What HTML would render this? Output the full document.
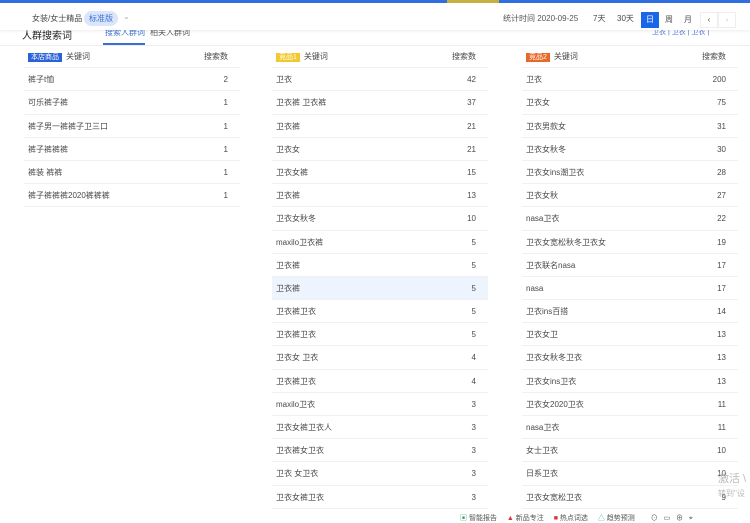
<!DOCTYPE html>
<html><head><meta charset="utf-8"><style>
body{margin:0;width:750px;height:523px;overflow:hidden;background:#fff;font-family:"Liberation Sans","Noto Sans CJK SC",sans-serif;font-size:8px;color:#4a4a4a;position:relative}
.top{position:absolute;left:0;top:0;width:750px;height:3px;background:#2f6fe0}
.top i{position:absolute;left:447px;width:52px;height:3px;background:#c8b040}
.hdr{position:absolute;top:3px;left:0;width:750px;height:27px;box-shadow:0 1px 3px rgba(0,0,0,.08);background:#fff;z-index:2}
.a{position:absolute;white-space:nowrap}
.badge{background:#dbe6fb;color:#3b6fd8;border-radius:8px;padding:2px 5px}
.btn{position:absolute;top:9px;height:14px;width:16px;text-align:center;line-height:14px;color:#555;border:1px solid #eee}
.col{position:absolute;top:45px}
.row{height:23.2px;line-height:23.2px;border-bottom:1px solid #f0f0f0;position:relative;box-sizing:border-box;padding-left:4px}
.row b{font-weight:normal;position:absolute;right:12px;top:0}
.tag{color:#fff;padding:1px 3px;margin-right:4px;font-size:7px}
.hl{background:#eef4fe}
</style></head><body>
<div class="top"><i></i></div>
<div class="hdr">
<span class="a" style="left:32px;top:10px;">女装/女士精品</span>
<span class="a badge" style="left:84px;top:8px;">标准版</span>
<span class="a" style="left:123px;top:9px;color:#aaa">⌄</span>
<span class="a" style="left:503px;top:10px;color:#555">统计时间 2020-09-25</span>
<span class="a" style="left:593px;top:10px">7天</span>
<span class="a" style="left:617px;top:10px">30天</span>
<div class="btn" style="left:641px;background:#1a66e8;color:#fff;border-color:#1a66e8">日</div>
<div class="btn" style="left:660px;border-color:#fff">周</div>
<div class="btn" style="left:679px;border-color:#fff">月</div>
<div class="btn" style="left:700px">‹</div>
<div class="btn" style="left:718px;color:#ccc">›</div>
</div>
<span class="a" style="left:22px;top:27px;font-size:10px;color:#222">人群搜索词</span>
<span class="a" style="left:105px;top:27px;color:#3b6fd8">搜索人群词</span>
<span class="a" style="left:150px;top:27px;color:#555">相关人群词</span>
<div class="a" style="left:103px;top:43px;width:42px;height:2px;background:#3b6fd8"></div>
<span class="a" style="left:652px;top:27px;color:#3b6fd8;font-size:7px">卫衣 | 卫衣 | 卫衣 |</span>
<div class="a" style="left:0;top:45px;width:750px;height:1px;background:#eee"></div>

<div class="col" style="left:24px;width:216px">
<div class="row"><span class="tag" style="background:#2a62d8">本店商品</span>关键词<b>搜索数</b></div>
<div class="row">裤子t恤<b>2</b></div>
<div class="row">可乐裤子裤<b>1</b></div>
<div class="row">裤子男一裤裤子卫三口<b>1</b></div>
<div class="row">裤子裤裤裤<b>1</b></div>
<div class="row">裤装 裤裤<b>1</b></div>
<div class="row">裤子裤裤裤2020裤裤裤<b>1</b></div>
</div>

<div class="col" style="left:272px;width:216px">
<div class="row"><span class="tag" style="background:#f2c82c">竞品1</span>关键词<b>搜索数</b></div>
<div class="row">卫衣<b>42</b></div>
<div class="row">卫衣裤 卫衣裤<b>37</b></div>
<div class="row">卫衣裤<b>21</b></div>
<div class="row">卫衣女<b>21</b></div>
<div class="row">卫衣女裤<b>15</b></div>
<div class="row">卫衣裤<b>13</b></div>
<div class="row">卫衣女秋冬<b>10</b></div>
<div class="row">maxilo卫衣裤<b>5</b></div>
<div class="row">卫衣裤<b>5</b></div>
<div class="row hl">卫衣裤<b>5</b></div>
<div class="row">卫衣裤卫衣<b>5</b></div>
<div class="row">卫衣裤卫衣<b>5</b></div>
<div class="row">卫衣女 卫衣<b>4</b></div>
<div class="row">卫衣裤卫衣<b>4</b></div>
<div class="row">maxilo卫衣<b>3</b></div>
<div class="row">卫衣女裤卫衣人<b>3</b></div>
<div class="row">卫衣裤女卫衣<b>3</b></div>
<div class="row">卫衣 女卫衣<b>3</b></div>
<div class="row">卫衣女裤卫衣<b>3</b></div>
</div>

<div class="col" style="left:522px;width:216px">
<div class="row"><span class="tag" style="background:#e8682a">竞品2</span>关键词<b>搜索数</b></div>
<div class="row">卫衣<b>200</b></div>
<div class="row">卫衣女<b>75</b></div>
<div class="row">卫衣男款女<b>31</b></div>
<div class="row">卫衣女秋冬<b>30</b></div>
<div class="row">卫衣女ins潮卫衣<b>28</b></div>
<div class="row">卫衣女秋<b>27</b></div>
<div class="row">nasa卫衣<b>22</b></div>
<div class="row">卫衣女宽松秋冬卫衣女<b>19</b></div>
<div class="row">卫衣联名nasa<b>17</b></div>
<div class="row">nasa<b>17</b></div>
<div class="row">卫衣ins百搭<b>14</b></div>
<div class="row">卫衣女卫<b>13</b></div>
<div class="row">卫衣女秋冬卫衣<b>13</b></div>
<div class="row">卫衣女ins卫衣<b>13</b></div>
<div class="row">卫衣女2020卫衣<b>11</b></div>
<div class="row">nasa卫衣<b>11</b></div>
<div class="row">女士卫衣<b>10</b></div>
<div class="row">日系卫衣<b>10</b></div>
<div class="row">卫衣女宽松卫衣<b>9</b></div>
</div>
<span class="a" style="left:718px;top:470px;color:#bbb;font-size:11px">激活 \</span>
<span class="a" style="left:718px;top:488px;color:#bbb;font-size:8px">转到"设</span>
<div class="a" style="left:460px;top:513px;width:290px;height:10px;background:#fff;font-size:7px;color:#555">
<span style="color:#2a9d5c">▣</span> 智能报告 <span style="color:#d33;margin-left:8px">▲</span> 新品专注 <span style="color:#d33;margin-left:8px">■</span> 热点词选 <span style="color:#3aa;margin-left:8px">△</span> 趋势预测 <span style="margin-left:14px">⊙ &nbsp; ▭ &nbsp; ⊕ &nbsp; ⌖</span>
</div>
</body></html>
